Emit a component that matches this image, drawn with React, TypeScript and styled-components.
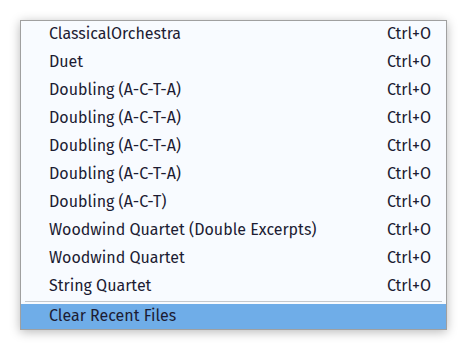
import React from 'react';
import styled, {createGlobalStyle} from 'styled-components';

const GlobalStyle = createGlobalStyle`
  html, body {
    margin: 0;
    padding: 0;
    background: #ffffff;
  }
`

const Page = styled.div`
  width: 467px;
  height: 350px;
  padding: 20px 0 0 20px;
  box-sizing: border-box;
`

const Menu = styled.div`
  width: 427px;
  box-sizing: border-box;
  background: #f8fbff;
  border: 1px solid #a0a0a0;
  box-shadow: 0 2px 10px rgba(0, 0, 0, 0.28);
  font-family: "Fira Sans", "Noto Sans", sans-serif;
  font-size: 16px;
  line-height: 20px;
  color: #1c1c33;
`

const Item = styled.div<{$active?: boolean}>`
  display: flex;
  align-items: flex-start;
  justify-content: space-between;
  box-sizing: border-box;
  height: ${p => (p.$active ? '25px' : '28px')};
  padding: ${p => (p.$active ? '2px' : '3px')} 15px 0 28px;
  background: ${p => (p.$active ? '#6fade8' : 'transparent')};
`

const Label = styled.span`
  white-space: nowrap;
`

const Shortcut = styled.span`
  white-space: nowrap;
`

const Separator = styled.div`
  height: 1px;
  margin: 0 4px 2px 4px;
  background: #c4c8cc;
`

const recent = [
  'ClassicalOrchestra',
  'Duet',
  'Doubling (A-C-T-A)',
  'Doubling (A-C-T-A)',
  'Doubling (A-C-T-A)',
  'Doubling (A-C-T-A)',
  'Doubling (A-C-T)',
  'Woodwind Quartet (Double Excerpts)',
  'Woodwind Quartet',
  'String Quartet',
]

export default function App() {
  return (
    <Page>
      <GlobalStyle />
      <Menu>
        {recent.map((name, i) => (
          <Item key={i}>
            <Label>{name}</Label>
            <Shortcut>Ctrl+O</Shortcut>
          </Item>
        ))}
        <Separator />
        <Item $active>
          <Label>Clear Recent Files</Label>
        </Item>
      </Menu>
    </Page>
  )
}
